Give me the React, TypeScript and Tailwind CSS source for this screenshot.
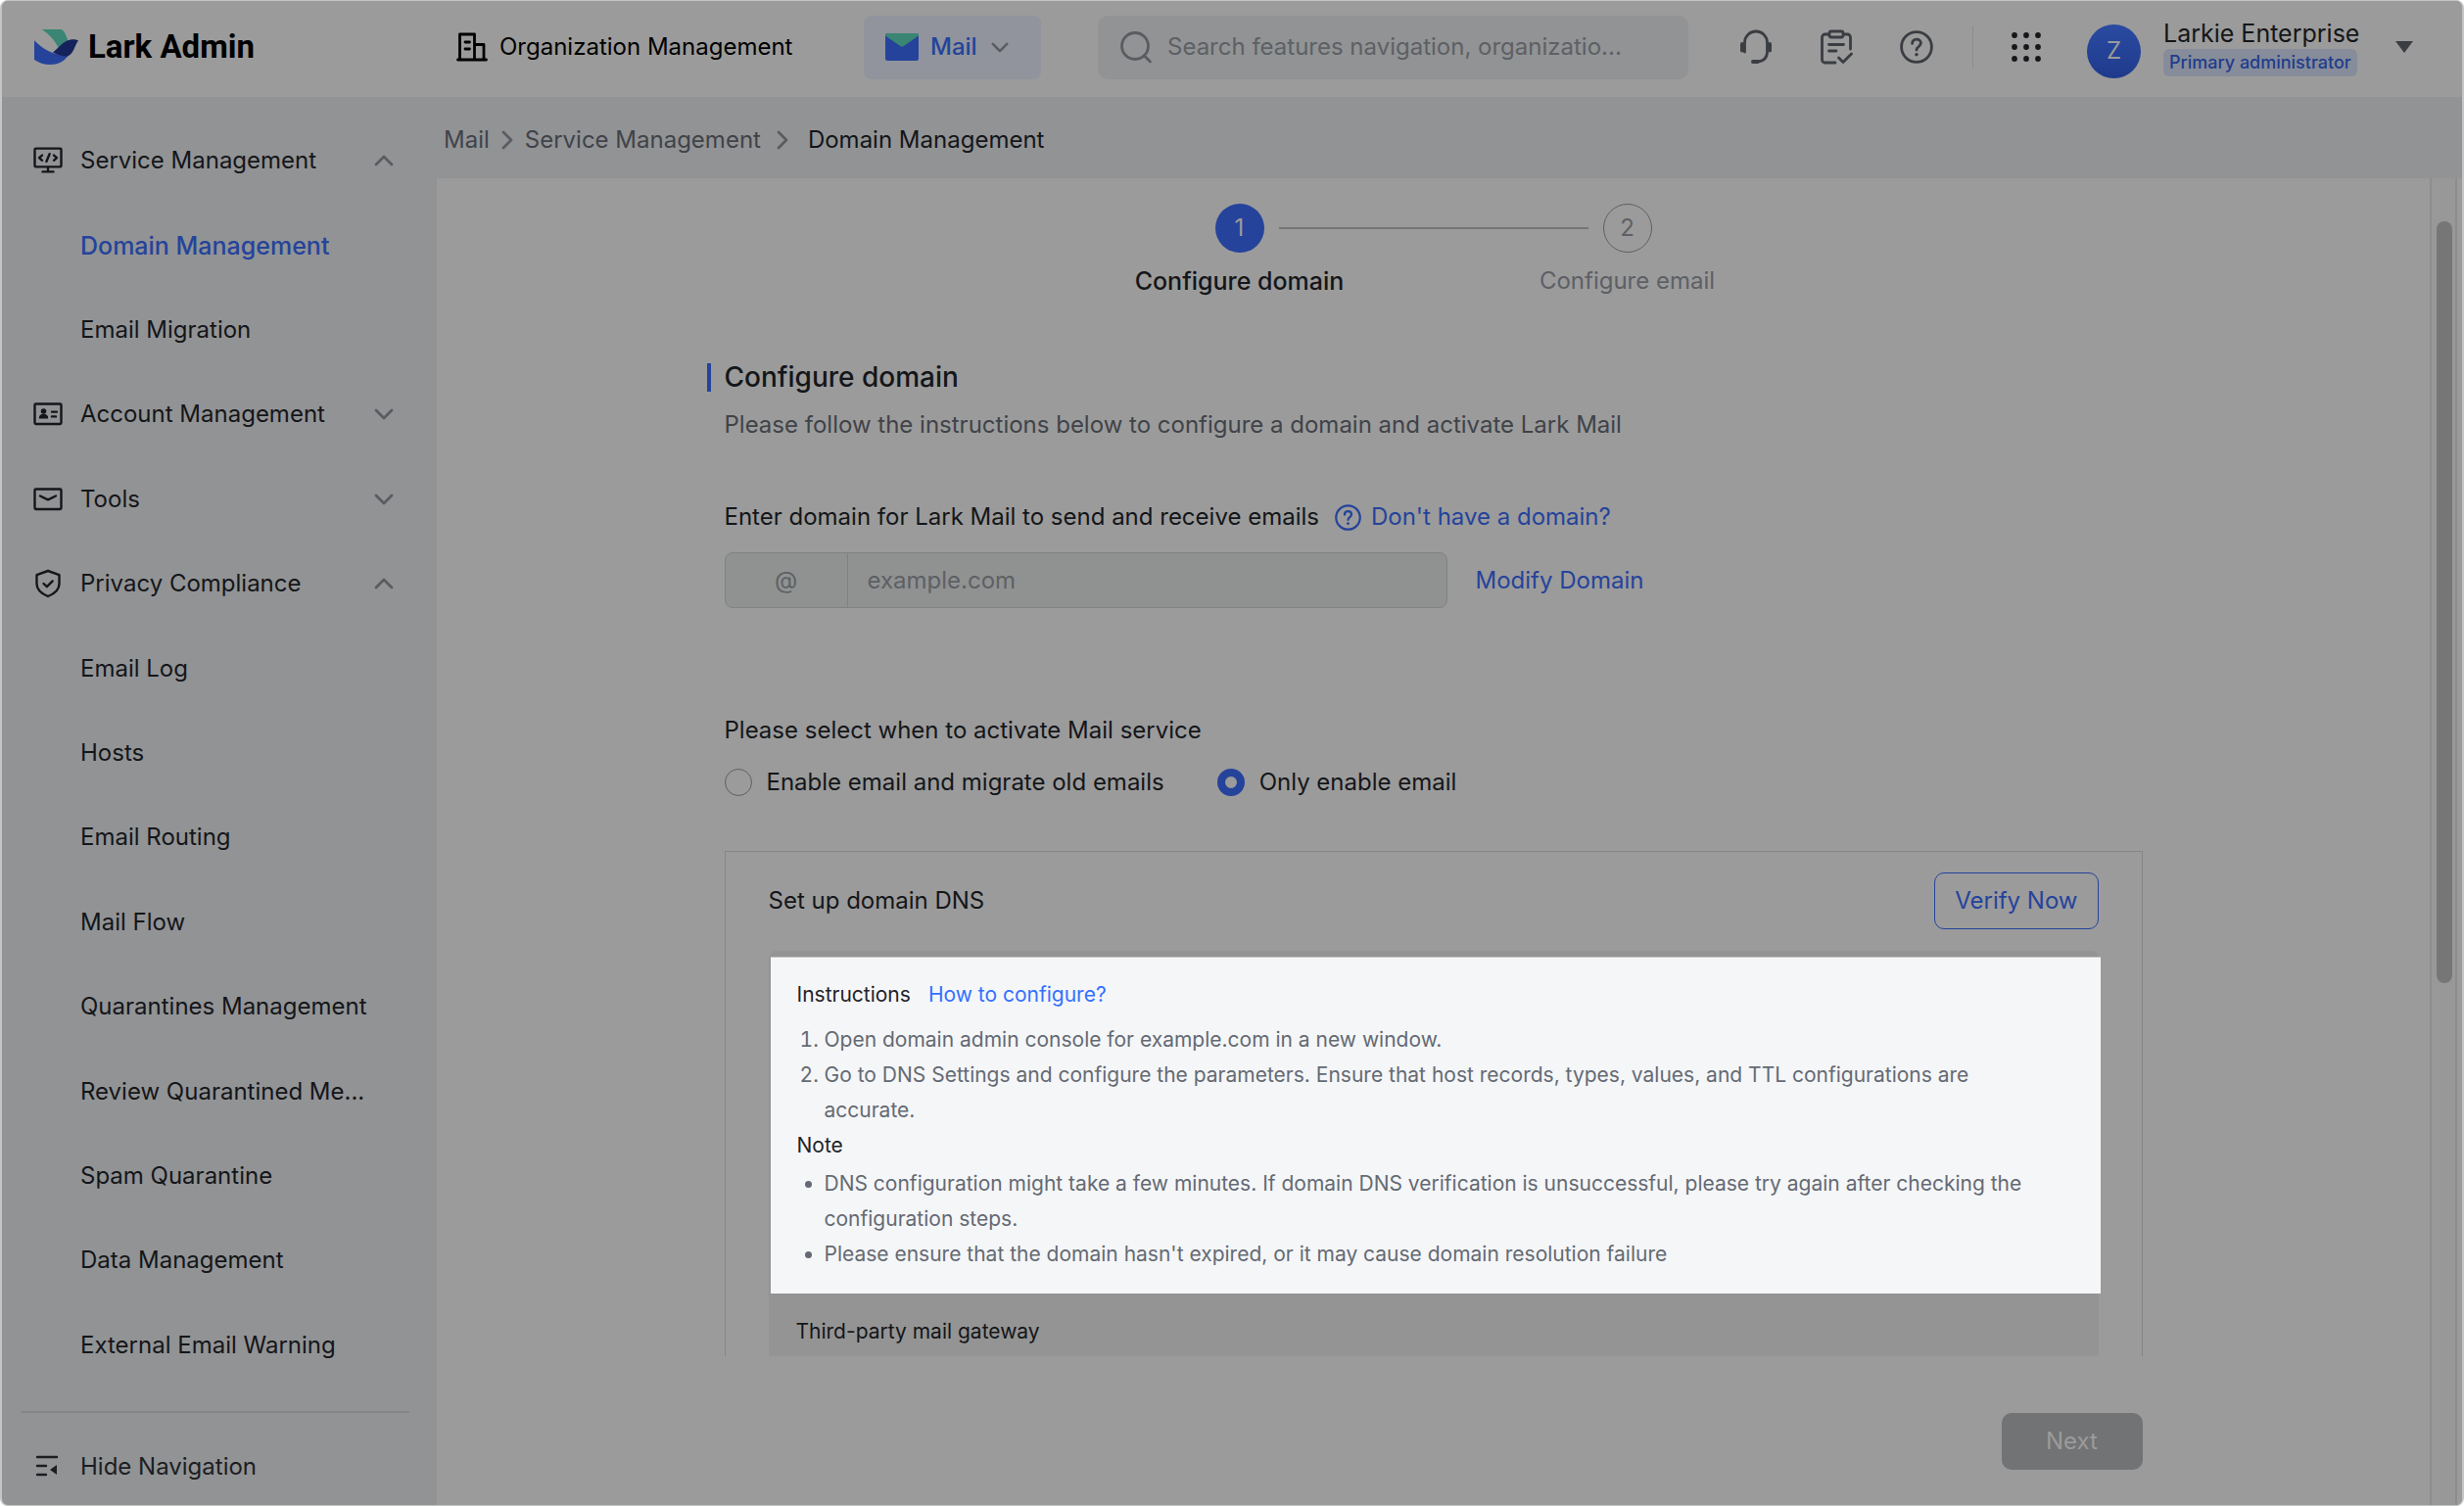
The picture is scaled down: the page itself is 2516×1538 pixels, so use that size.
import type { ReactNode } from "react";

type NavItem = {
  label: string;
  icon?: ReactNode;
  open?: boolean;
  active?: boolean;
};

function Chevron({ className }: { className?: string }) {
  return (
    <svg viewBox="0 0 20 12" className={className} fill="none" stroke="currentColor" strokeWidth="2.8" strokeLinecap="round" strokeLinejoin="round">
      <path d="M2 2l8 8 8-8" />
    </svg>
  );
}

function HelpIcon({ className }: { className?: string }) {
  return (
    <svg viewBox="0 0 34 34" className={className} fill="none" stroke="currentColor" strokeWidth="2.8" strokeLinecap="round">
      <circle cx="17" cy="17" r="15.4" />
      <path d="M12.6 13.4c0-2.6 1.9-4.3 4.4-4.3s4.4 1.6 4.4 4c0 3.4-4.4 3.4-4.4 7" />
      <circle cx="17" cy="24.8" r="1.8" fill="currentColor" stroke="none" />
    </svg>
  );
}

const navIcon = "w-[30px] h-[30px]";

const serviceIcon = (
  <svg viewBox="0 0 30 30" className={navIcon} fill="none" stroke="currentColor" strokeWidth="2.4" strokeLinecap="round" strokeLinejoin="round">
    <rect x="1.5" y="2.6" width="27" height="18.8" rx="1.2" />
    <path d="M9 9.600l-3 2.600 3 2.600M21 9.600l3 2.600-3 2.600M16.600 8.200l-3.200 7.800M15 22v4M9.500 26.400h11" />
  </svg>
);

const accountIcon = (
  <svg viewBox="0 0 30 30" className={navIcon} fill="none" stroke="currentColor" strokeWidth="2.4" strokeLinecap="round" strokeLinejoin="round">
    <rect x="1.5" y="4.5" width="27" height="20.5" rx="1.2" />
    <circle cx="10.5" cy="12" r="2.8" fill="currentColor" stroke="none" />
    <path d="M5.8 19.400c0-3 1.500-4.600 4.700-4.600s4.700 1.600 4.700 4.600z" fill="currentColor" stroke="none" />
    <path d="M19 12.600h5M19 17.400h4" />
  </svg>
);

const toolsIcon = (
  <svg viewBox="0 0 30 30" className={navIcon} fill="none" stroke="currentColor" strokeWidth="2.4" strokeLinecap="round" strokeLinejoin="round">
    <rect x="1.5" y="4.5" width="27" height="20.5" rx="1.2" />
    <path d="M7 11.500l8 3.800 8-3.800" />
  </svg>
);

const privacyIcon = (
  <svg viewBox="0 0 30 30" className={navIcon} fill="none" stroke="currentColor" strokeWidth="2.4" strokeLinecap="round" strokeLinejoin="round">
    <path d="M15 2l11.500 4.200v9c0 6.200-4.600 9.900-11.500 12.800C8.100 25.100 3.500 21.400 3.500 15.200v-9z" />
    <path d="M10.500 15l3.400 3.200 5.800-5.800" />
  </svg>
);

const navItems: NavItem[] = [
  { label: "Service Management", icon: serviceIcon, open: true },
  { label: "Domain Management", active: true },
  { label: "Email Migration" },
  { label: "Account Management", icon: accountIcon, open: false },
  { label: "Tools", icon: toolsIcon, open: false },
  { label: "Privacy Compliance", icon: privacyIcon, open: true },
  { label: "Email Log" },
  { label: "Hosts" },
  { label: "Email Routing" },
  { label: "Mail Flow" },
  { label: "Quarantines Management" },
  { label: "Review Quarantined Me..." },
  { label: "Spam Quarantine" },
  { label: "Data Management" },
  { label: "External Email Warning" },
];

function Header() {
  return (
    <header className="flex h-[98px] shrink-0 items-center bg-[#9b9b9b] pb-1 pl-[33px] pr-[50px]">
      <a href="#home" className="flex w-[431px] shrink-0 items-center gap-2.5 text-black">
        <svg viewBox="0 0 45 36" className="h-9 w-[45px]">
          <path d="M7.500 0h19.500c3 0 6 6.500 7.200 11.400C30 13 27 16.500 24.600 19 21 11 15 4.500 7.500 0z" fill="#3a8574" />
          <path d="M0 11.200c8 8.500 20 15.500 34.500 15.800C30 33 24 36 16.500 36 10 36 4.500 34 0 31z" fill="#25439b" />
          <path d="M45 11.300c-3-1.600-8-1.700-12.500.8C27 15 24 20 19 23.500c6 3.500 12 4.500 15.500 3.800C40 25 41.500 16 45 11.300z" fill="#14235c" />
        </svg>
        <span className="font-[Roboto,sans-serif] text-[33px] font-bold leading-10">Lark Admin</span>
      </a>
      <a href="#organization" className="flex w-[351px] shrink-0 items-center gap-3 text-black">
        <svg viewBox="0 0 32 32" className="h-8 w-8" fill="none" stroke="currentColor" strokeWidth="2.8" strokeLinecap="round" strokeLinejoin="round">
          <path d="M3.500 29V3h15v26M18.500 13.500H28V29M1.500 29h29M9 11h4.500M9 18h4.500" />
        </svg>
        Organization Management
      </a>
      <button type="button" className="ml-[65px] flex h-[65px] w-[181px] shrink-0 items-center rounded-lg bg-[#91949d] pl-[22px] font-medium text-[#25439b]">
        <svg viewBox="0 0 34 28" className="mr-3 h-7 w-[34px]">
          <rect width="34" height="28" rx="2.500" fill="#25439b" />
          <path d="M2.500 0h29A2.500 2.500 0 0 1 34 2.500L18.800 13q-1.800 1.200-3.600 0L0 2.500A2.500 2.500 0 0 1 2.500 0z" fill="#3a8574" />
        </svg>
        Mail
        <Chevron className="ml-3.5 h-[11px] w-[18px] text-[#5a5c61]" />
      </button>
      <label className="ml-[58px] flex h-[65px] w-[603px] items-center rounded-[10px] bg-[#929394] pl-[22px]">
        <svg viewBox="0 0 34 34" className="mr-[15px] h-[34px] w-[34px] shrink-0 text-[#5a5c61]" fill="none" stroke="currentColor" strokeWidth="2.8" strokeLinecap="round">
          <circle cx="16" cy="16" r="13.500" />
          <path d="M25.500 26l6 6" />
        </svg>
        <input
          type="text"
          aria-label="Search"
          placeholder="Search features navigation, organizatio..."
          className="min-w-0 flex-1 bg-transparent outline-none placeholder:text-[#5d6065]"
        />
      </label>
      <div className="ml-auto flex items-center text-[#3a3d42]">
        <button type="button" aria-label="Support">
          <svg viewBox="0 0 34 36" className="h-9 w-[34px]" fill="none" stroke="currentColor" strokeWidth="2.8" strokeLinecap="round">
            <path d="M5.500 23V13.500a11.500 11.500 0 0 1 23 0v9c0 6-3.500 10-10 10.500" />
            <path d="M3 15v6.500M31 15v6.500" strokeWidth="4" />
            <path d="M14 33h4.500" strokeWidth="4" />
          </svg>
        </button>
        <button type="button" aria-label="Tasks" className="ml-12">
          <svg viewBox="0 0 34 36" className="h-9 w-[34px]" fill="none" stroke="currentColor" strokeWidth="2.8" strokeLinecap="round" strokeLinejoin="round">
            <path d="M9 5H5.500A3 3 0 0 0 2.500 8v23a3 3 0 0 0 3 3H16M25 5h3.500a3 3 0 0 1 3 3v12" />
            <rect x="10" y="2" width="14" height="6" rx="2" />
            <path d="M9.500 15.500h15M9.500 22h7.500M19.500 29l4.500 4.500 8.500-8.500" />
          </svg>
        </button>
        <button type="button" aria-label="Help" className="ml-12">
          <HelpIcon className="h-[34px] w-[34px]" />
        </button>
        <span className="ml-10 h-[43px] w-px bg-[#8b8c8e]" />
        <button type="button" aria-label="Apps" className="ml-[38px] text-[#15171b]">
          <svg viewBox="0 0 32 32" className="h-8 w-8" fill="currentColor">
            {[4, 16, 28].map((y) => [4, 16, 28].map((x) => <circle key={`${x}-${y}`} cx={x} cy={y} r="2.900" />))}
          </svg>
        </button>
        <span className="ml-[46px] mt-2 flex h-[55px] w-[55px] items-center justify-center rounded-full bg-linear-to-b from-[#2a4ba2] to-[#1f3a8c] text-[#9b9b9b]">Z</span>
        <div className="ml-[23px] flex w-[201px] flex-col items-start whitespace-nowrap text-[#141619]">
          <span className="text-[25px] leading-8">Larkie Enterprise</span>
          <span className="rounded-md bg-[#868c9a] px-1.5 text-lg font-medium leading-7 text-[#213c8c]">Primary administrator</span>
        </div>
        <button type="button" aria-label="Account menu" className="ml-9">
          <svg viewBox="0 0 18 12" className="h-3 w-[18px]" fill="currentColor">
            <path d="M0 0h18L9 12z" />
          </svg>
        </button>
      </div>
    </header>
  );
}

function Sidebar() {
  return (
    <aside className="flex w-[444px] shrink-0 flex-col pt-[22px]">
      <nav className="flex flex-1 flex-col">
        {navItems.map(({ label, icon, open, active }) => (
          <a
            key={label}
            href="#nav"
            className={`flex flex-1 items-center pl-8 pr-11 ${active ? "text-[25px] font-medium text-[#25439b]" : "text-[#141619]"}`}
          >
            <span className="w-12">{icon}</span>
            <span className="flex-1 truncate">{label}</span>
            {open !== undefined && <Chevron className={`h-3 w-5 text-[#5a5c61] ${open ? "rotate-180" : ""}`} />}
          </a>
        ))}
      </nav>
      <div className="ml-[19px] mr-7 mt-6 border-t-2 border-[#858688]" />
      <button type="button" className="flex h-[94px] items-center pl-8 pt-4 text-[#1c1e22]">
        <svg viewBox="0 0 30 30" className="mr-[18px] h-[30px] w-[30px]" fill="none" stroke="currentColor" strokeWidth="2.4" strokeLinecap="round">
          <path d="M4 5h20M4 14h9M4 23h9" />
          <path d="M24 13v10l-7-5z" fill="currentColor" stroke="none" />
        </svg>
        Hide Navigation
      </button>
    </aside>
  );
}

function Breadcrumb() {
  return (
    <div className="flex h-[83px] shrink-0 items-center pl-[7px] pt-1 text-[#404349]">
      <a href="#mail">Mail</a>
      <Chevron className="mx-2 h-3 w-5 -rotate-90 text-[#5a5c61]" />
      <a href="#service">Service Management</a>
      <Chevron className="ml-3 mr-4 h-3 w-5 -rotate-90 text-[#5a5c61]" />
      <span className="text-[#141619]">Domain Management</span>
    </div>
  );
}

function Steps() {
  return (
    <ol className="flex justify-center">
      <li className="flex w-52 flex-col items-center gap-3.5">
        <span className="flex h-[50px] w-[50px] items-center justify-center rounded-full bg-[#25439b] text-[#9b9b9b]">1</span>
        <span className="whitespace-nowrap text-[25px] font-medium text-[#141619]">Configure domain</span>
      </li>
      <li aria-hidden className="-mx-16 mt-6 h-0.5 w-[316px] bg-[#757575]" />
      <li className="flex w-52 flex-col items-center gap-3.5 text-[#5d6065]">
        <span className="flex h-[50px] w-[50px] items-center justify-center rounded-full border border-[#5d6065]">2</span>
        <span className="whitespace-nowrap">Configure email</span>
      </li>
    </ol>
  );
}

function Instructions() {
  return (
    <div className="rounded-t-lg bg-[#949494] pt-1.5 text-[21px] leading-9">
      <div className="-mr-0.5 ml-0.5 border-t border-[#c3c5c7] bg-[#f5f6f8] pb-[22px] pl-[27px] pr-12 pt-5 text-[#646a73]">
        <h3 className="mb-2.5 text-[#1f2329]">
          Instructions
          <a href="#configure" className="ml-[18px] text-[#3370ff]">How to configure?</a>
        </h3>
        <ol className="list-decimal pl-7">
          <li>Open domain admin console for example.com in a new window.</li>
          <li>Go to DNS Settings and configure the parameters. Ensure that host records, types, values, and TTL configurations are accurate.</li>
        </ol>
        <h3 className="mb-[3px] text-[#1f2329]">Note</h3>
        <ul className="list-disc pl-7">
          <li>DNS configuration might take a few minutes. If domain DNS verification is unsuccessful, please try again after checking the configuration steps.</li>
          <li>Please ensure that the domain hasn't expired, or it may cause domain resolution failure</li>
        </ul>
      </div>
      <h3 className="px-7 pb-10 pt-[21px] text-[#141619]">Third-party mail gateway</h3>
    </div>
  );
}

const radioClass =
  "h-7 w-7 appearance-none rounded-full border border-[#5d6065] checked:border-8 checked:border-[#25439b]";

function ConfigureDomain() {
  return (
    <section className="mx-auto w-full max-w-[1448px] text-[#141619]">
      <div className="-ml-[18px] mt-[65px] flex items-center gap-3.5">
        <span className="h-[29px] w-1 bg-[#25439b]" />
        <h2 className="text-[28px] font-medium leading-9">Configure domain</h2>
      </div>
      <p className="mt-4 text-[#404349]">Please follow the instructions below to configure a domain and activate Lark Mail</p>

      <div className="mt-16 flex items-center">
        <label htmlFor="domain">Enter domain for Lark Mail to send and receive emails</label>
        <HelpIcon className="ml-4 mr-2.5 h-[27px] w-[27px] text-[#25439b]" />
        <a href="#domain-help" className="text-[#25439b]">Don't have a domain?</a>
      </div>
      <div className="mt-[21px] flex items-center">
        <div className="flex h-[57px] w-[738px] items-center overflow-hidden rounded-lg border border-[#808282] bg-[#909291] text-[#5d6065]">
          <span className="flex h-full w-[125px] items-center justify-center border-r border-[#808282]">@</span>
          <input id="domain" type="text" placeholder="example.com" className="h-full min-w-0 flex-1 bg-transparent px-5 outline-none placeholder:text-[#5d6065]" />
        </div>
        <a href="#modify" className="ml-[29px] text-[#25439b]">Modify Domain</a>
      </div>

      <fieldset className="mt-[110px]">
        <legend>Please select when to activate Mail service</legend>
        <div className="mt-[23px] flex items-center gap-[54px]">
          <label className="flex items-center gap-[15px]">
            <input type="radio" name="activate" className={radioClass} />
            Enable email and migrate old emails
          </label>
          <label className="flex items-center gap-[15px]">
            <input type="radio" name="activate" defaultChecked className={radioClass} />
            Only enable email
          </label>
        </div>
      </fieldset>

      <div className="mt-[55px] border border-[#858585] px-11 pt-[21px]">
        <div className="mb-[22px] flex items-center justify-between">
          <h2>Set up domain DNS</h2>
          <button type="button" className="h-[58px] rounded-[10px] border border-[#25439b] px-5 text-[#25439b]">Verify Now</button>
        </div>
        <Instructions />
      </div>
    </section>
  );
}

export default function App() {
  return (
    <div className="h-screen bg-white">
      <div className="flex h-full flex-col overflow-hidden rounded-lg border-2 border-t border-b border-[#c4c6c6] bg-[#929395] font-[Inter,sans-serif] text-2xl leading-[30px]">
        <Header />
        <div className="flex min-h-0 flex-1">
          <Sidebar />
          <div className="flex min-w-0 flex-1 flex-col">
            <Breadcrumb />
            <div className="flex min-h-0 flex-1 bg-[#9b9b9b]">
              <main className="flex min-w-0 flex-1 flex-col">
                <div className="min-h-0 flex-1 overflow-hidden pt-[26px]">
                  <Steps />
                  <ConfigureDomain />
                </div>
                <footer className="mx-auto w-full max-w-[1448px] pb-9 pt-[58px] text-right">
                  <button type="button" className="h-[58px] w-36 rounded-[10px] bg-[#727375] text-[#9b9b9b]">Next</button>
                </footer>
              </main>
              <div className="mr-[5px] w-7 border-x-2 border-[#8d8d8d] bg-[#989898] px-[5px] pt-11">
                <div className="h-[778px] w-4 rounded-full bg-[#767676]" />
              </div>
            </div>
          </div>
        </div>
      </div>
    </div>
  );
}
